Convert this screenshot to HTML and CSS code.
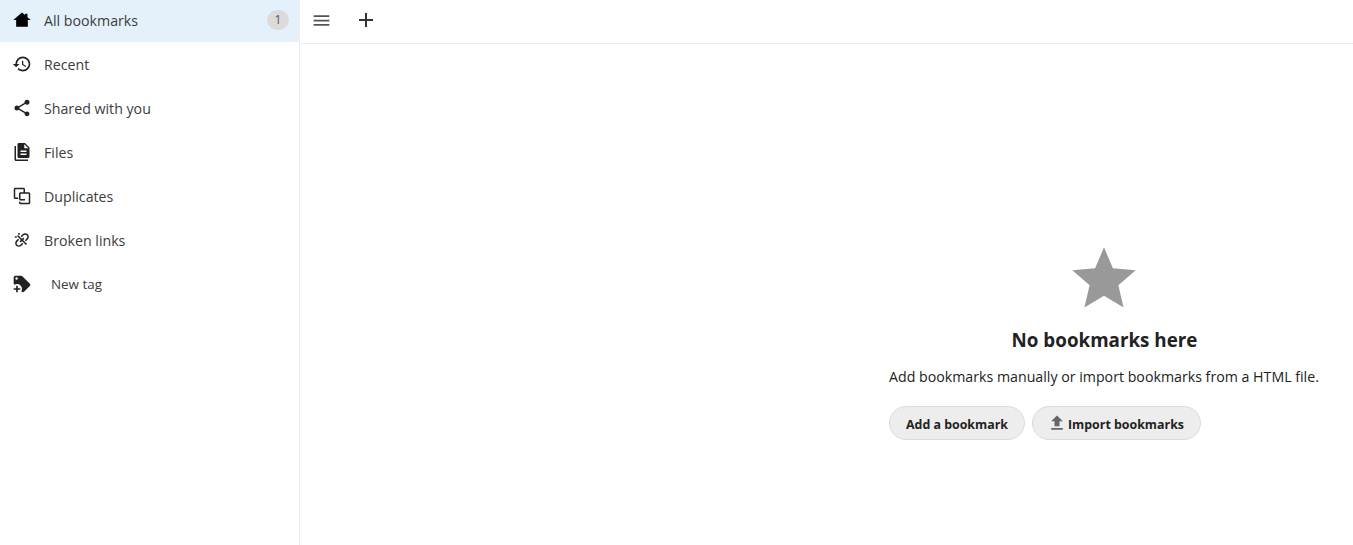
FILE: index.html
```html
<!DOCTYPE html>
<html lang="en">
<head>
<meta charset="utf-8">
<title>Bookmarks</title>
<link rel="stylesheet" href="styles.css">
</head>
<body>
<div class="app">
  <nav class="sidebar">
    <a class="item active">
      <svg class="icon" viewBox="0 0 24 24"><path d="M5,20V12H1.5L12,3L15.5,6V4.500H18.500V8.600L22.500,12H19V20Z"/></svg>
      <span class="label">All bookmarks</span><span class="badge">1</span>
    </a>
    <a class="item">
      <svg class="icon" viewBox="0 0 24 24"><path d="M13.5,8H12V13L16.28,15.54L17,14.33L13.5,12.25V8M13,3A9,9 0 0,0 4,12H1L4.96,16.03L9,12H6A7,7 0 0,1 13,5A7,7 0 0,1 20,12A7,7 0 0,1 13,19C11.07,19 9.32,18.21 8.06,16.94L6.64,18.36C8.27,20 10.5,21 13,21A9,9 0 0,0 22,12A9,9 0 0,0 13,3"/></svg>
      <span class="label">Recent</span>
    </a>
    <a class="item">
      <svg class="icon" viewBox="0 0 24 24"><path d="M18,16.08C17.24,16.08 16.56,16.38 16.04,16.85L8.91,12.7C8.96,12.47 9,12.24 9,12C9,11.76 8.96,11.53 8.91,11.3L15.96,7.19C16.5,7.69 17.21,8 18,8A3,3 0 0,0 21,5A3,3 0 0,0 18,2A3,3 0 0,0 15,5C15,5.24 15.04,5.47 15.09,5.7L8.04,9.81C7.5,9.31 6.79,9 6,9A3,3 0 0,0 3,12A3,3 0 0,0 6,15C6.79,15 7.5,14.69 8.04,14.19L15.16,18.34C15.11,18.55 15.08,18.77 15.08,19C15.08,20.61 16.39,21.91 18,21.91C19.61,21.91 20.92,20.61 20.92,19A2.92,2.92 0 0,0 18,16.08Z"/></svg>
      <span class="label">Shared with you</span>
    </a>
    <a class="item">
      <svg class="icon icon-sm" viewBox="0 0 24 24"><path fill-rule="evenodd" d="M8,0H16L22,6V18C22,19.1 21.1,20 20,20H8C6.9,20 6,19.1 6,18V2C6,.9 6.9,0 8,0ZM15,1.5V7H20.5ZM10,10V12H18V10ZM10,14V16H18V14Z"/><path d="M2,4H4V22H20V24H4C2.9,24 2,23.1 2,22Z"/></svg>
      <span class="label">Files</span>
    </a>
    <a class="item">
      <svg class="icon icon-sm" viewBox="0 0 24 24"><path d="M3,1C1.89,1 1,1.89 1,3V14C1,15.11 1.89,16 3,16H7V14H3V3H14V7H16V3C16,1.89 15.11,1 14,1H3M10,7C8.89,7 8,7.89 8,9V16C8,17.11 8.89,18 10,18H16V16H10V9H21V21H10V19.5H8V21C8,22.11 8.9,23 10,23H21C22.11,23 23,22.11 23,21V9C23,7.89 22.11,7 21,7H10Z"/></svg>
      <span class="label">Duplicates</span>
    </a>
    <a class="item">
      <svg class="icon icon-sm" viewBox="0 0 24 24"><path class="stroke" d="M11,7.500L13.500,5C15,3.500 17.500,3.500 19,5C20.500,6.500 20.500,9 19,10.500L16.500,13M13,16.500L10.500,19C9,20.500 6.500,20.500 5,19C3.500,17.500 3.500,15 5,13.500L7.500,11M9.500,14.500L14.500,9.500M6,6L18,18M8,2.500V5M2.500,8H5"/></svg>
      <span class="label">Broken links</span>
    </a>
    <a class="item">
      <svg class="icon" viewBox="0 0 24 24"><path d="M21.41 11.58L12.41 2.58A2 2 0 0 0 11 2H4A2 2 0 0 0 2 4V11A2 2 0 0 0 2.59 12.42L3 12.82A6 6 0 0 1 6 12A6 6 0 0 1 12 18A6 6 0 0 1 11.18 21L11.58 21.41A2 2 0 0 0 13 22A2 2 0 0 0 14.41 21.41L21.41 14.41A2 2 0 0 0 22 13A2 2 0 0 0 21.41 11.58M5.5 7A1.5 1.5 0 1 1 7 5.5A1.5 1.5 0 0 1 5.5 7M10 19H7V22H5V19H2V17H5V14H7V17H10Z"/></svg>
      <span class="label small">New tag</span>
    </a>
  </nav>
  <div class="content">
    <header class="toolbar">
      <button class="tool"><svg class="tool-icon menu" viewBox="0 0 24 24"><path d="M3,6H21V8H3V6M3,11H21V13H3V11M3,16H21V18H3V16Z"/></svg></button>
      <button class="tool"><svg class="tool-icon" viewBox="0 0 24 24"><path d="M19,13H13V19H11V13H5V11H11V5H13V11H19V13Z"/></svg></button>
    </header>
    <main class="main">
      <section class="empty">
        <svg class="star" viewBox="0 0 24 24"><path d="M12,17.27L18.18,21L16.54,13.97L22,9.24L14.81,8.62L12,2L9.19,8.62L2,9.24L7.45,13.97L5.82,21L12,17.27Z"/></svg>
        <h2 class="title">No bookmarks here</h2>
        <p class="desc">Add bookmarks manually or import bookmarks from a HTML file.</p>
        <div class="actions">
          <button class="btn">Add a bookmark</button>
          <button class="btn btn-import"><svg class="btn-icon" viewBox="0 0 24 24"><path d="M9,16V10H5L12,3L19,10H15V16H9M5,20V18H19V20H5Z"/></svg>Import bookmarks</button>
        </div>
      </section>
    </main>
  </div>
</div>
</body>
</html>
```
FILE: styles.css
```css
* { box-sizing: border-box; }
html, body { margin: 0; height: 100%; }
body {
  font-family: "Open Sans", "Noto Sans", "Liberation Sans", sans-serif;
  font-size: 15px;
  color: #222;
  background: #fff;
  overflow: hidden;
}
.app { display: flex; height: 545px; }
.sidebar {
  width: 300px;
  flex: none;
  border-right: 1px solid #ededed;
}
.item {
  display: flex;
  align-items: center;
  height: 44px;
  padding: 0 10px 0 12px;
  color: #3c3c3c;
}
.item.active { background: #e4f1fa; height: 42px; padding-bottom: 2px; }
.icon { width: 20px; height: 20px; flex: none; fill: #222; margin-right: 12px; }
.icon-sm { width: 18px; height: 18px; margin: 0 13px 0 1px; }
.active .icon { fill: #000; }
.stroke { fill: none; stroke: #222; stroke-width: 2; }
.label { flex: 1; font-size: 14.2px; }
.label.small { font-size: 13.4px; padding-left: 7px; }
.badge {
  width: 22px;
  height: 20px;
  border-radius: 10px;
  background: #dbdbdb;
  font-size: 12px;
  line-height: 20px;
  text-align: center;
  color: #555;
}
.content { flex: 1; display: flex; flex-direction: column; }
.toolbar {
  display: flex;
  gap: 3px;
  height: 44px;
  flex: none;
  border-bottom: 1px solid #ededed;
}
.tool {
  width: 42px;
  height: 40px;
  padding: 0;
  border: 0;
  background: none;
  display: flex;
  align-items: center;
  justify-content: center;
}
.tool-icon { width: 24px; height: 24px; fill: #333; }
.tool-icon.menu { width: 21px; height: 21px; fill: #555; }
.main { flex: 1; display: flex; justify-content: flex-end; padding: 197px 33px 0 0; }
.empty { width: 431px; display: flex; flex-direction: column; }
.star { width: 76px; height: 76px; fill: #999; align-self: center; flex: none; margin: 0 2px 1px 0; }
.title {
  margin: 9px 0 0;
  font-size: 18.8px;
  line-height: 27px;
  font-weight: 700;
  text-align: center;
  color: #222;
}
.desc {
  margin: 13px 0 0;
  font-size: 14.2px;
  line-height: 20px;
  white-space: nowrap;
  color: #222;
}
.actions { display: flex; gap: 7px; margin-top: 19px; }
.btn {
  display: flex;
  align-items: center;
  height: 34px;
  padding: 2px 16px 0;
  border: 1px solid #dbdbdb;
  border-radius: 17px;
  background: #ededed;
  font: 700 12.4px "Open Sans", "Noto Sans", sans-serif;
  color: #222;
}
.btn-import { padding-left: 14px; }
.btn-icon { width: 20px; height: 20px; fill: #666; margin: -2px 1px 0 0; }
```
